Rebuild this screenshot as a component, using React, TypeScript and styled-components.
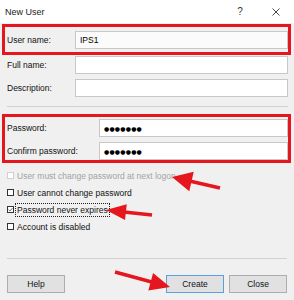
import React from 'react';
import styled, { createGlobalStyle } from 'styled-components';

const GlobalStyle = createGlobalStyle`
    html, body {
        margin: 0;
        padding: 0;
        background: #f0f0f0;
    }
    * {
        box-sizing: border-box;
    }
`;

const RED = '#e5161d';

const Window = styled.div`
    position: relative;
    width: 294px;
    height: 300px;
    display: flex;
    flex-direction: column;
    background: #f0f0f0;
    font-family: 'Liberation Sans', Arial, sans-serif;
    font-size: 8.5px;
    color: #111;
    overflow: hidden;
`;

const TitleBar = styled.div`
    height: 23px;
    display: flex;
    align-items: center;
    background: #ffffff;
    padding-left: 5px;
`;

const Title = styled.div`
    flex: 1;
    font-size: 9px;
    color: #222;
`;

const TitleButton = styled.div`
    width: 36px;
    text-align: center;
    font-size: 10px;
    color: #333;
    display: flex;
    justify-content: center;
    align-items: center;
`;

const Content = styled.div`
    flex: 1;
    padding: 1px 6px 0 7px;
    display: flex;
    flex-direction: column;
`;

const Highlight = styled.div<{ $pt: number; $pb: number; $mt?: number }>`
    margin: ${(p) => p.$mt ?? 0}px -3px 0 -5px;
    border: 3px solid ${RED};
    padding: ${(p) => p.$pt}px 0 ${(p) => p.$pb}px 2px;
    display: flex;
    flex-direction: column;
    gap: 5px;
`;

const Fields = styled.div<{ $mt?: number }>`
    display: flex;
    flex-direction: column;
    gap: 5px;
    margin-top: ${(p) => p.$mt ?? 0}px;
`;

const FieldRow = styled.div<{ $labelWidth: number }>`
    display: grid;
    grid-template-columns: ${(p) => p.$labelWidth}px 1fr;
    align-items: center;
    height: 18px;
`;

const Label = styled.div`
    white-space: nowrap;
`;

const TextBox = styled.div<{ $shade?: boolean }>`
    height: 18px;
    border: 1px solid #c8c8c8;
    background: ${(p) => (p.$shade ? '#fbfbfb' : '#ffffff')};
    display: flex;
    align-items: center;
    padding-left: 4px;
    color: #000;
`;

const Dots = styled.span`
    font-family: 'DejaVu Sans', sans-serif;
    font-size: 6px;
    letter-spacing: 0.2px;
    color: #000;
`;

const Separator = styled.div<{ $mt?: number }>`
    height: 1px;
    background: #d2d2d2;
    margin-top: ${(p) => p.$mt ?? 0}px;
`;

const Checks = styled.div`
    margin-top: 4px;
    display: flex;
    flex-direction: column;
`;

const CheckRow = styled.div<{ $disabled?: boolean }>`
    height: 17px;
    display: flex;
    align-items: center;
    gap: 3px;
    color: ${(p) => (p.$disabled ? '#a3a3a3' : '#111')};
`;

const Box = styled.div<{ $disabled?: boolean }>`
    width: 7px;
    height: 7px;
    border: 1px solid ${(p) => (p.$disabled ? '#d0d0d0' : '#333')};
    background: #fff;
    display: flex;
    align-items: center;
    justify-content: center;
`;

const CheckText = styled.span<{ $focused?: boolean }>`
    padding: 1px 1px;
    margin-left: -1px;
    outline: ${(p) => (p.$focused ? '1px dotted #222' : 'none')};
`;

const Footer = styled.div`
    display: flex;
    flex-direction: column;
    padding: 0 7px 7px 7px;
`;

const ButtonBar = styled.div`
    margin-top: 16px;
    display: flex;
    justify-content: space-between;
`;

const ButtonGroup = styled.div`
    display: flex;
    gap: 5px;
`;

const Button = styled.div<{ $primary?: boolean }>`
    width: 58px;
    height: 18px;
    display: flex;
    align-items: center;
    justify-content: center;
    background: #e1e1e1;
    border: 1px solid ${(p) => (p.$primary ? '#5a9fe0' : '#adadad')};
    color: #111;
`;

const Overlay = styled.svg`
    position: absolute;
    left: 0;
    top: 0;
    pointer-events: none;
`;

interface CheckItem {
    text: string;
    checked?: boolean;
    disabled?: boolean;
    focused?: boolean;
}

const checks: CheckItem[] = [
    { text: 'User must change password at next logon', disabled: true },
    { text: 'User cannot change password' },
    { text: 'Password never expires', checked: true, focused: true },
    { text: 'Account is disabled' },
];

const Arrow: React.FC<{ tail: [number, number]; tip: [number, number]; head: number; half: number }> = ({
    tail,
    tip,
    head,
    half,
}) => {
    const dx = tip[0] - tail[0];
    const dy = tip[1] - tail[1];
    const len = Math.hypot(dx, dy);
    const ux = dx / len;
    const uy = dy / len;
    const bx = tip[0] - ux * head;
    const by = tip[1] - uy * head;
    const nx = -uy;
    const ny = ux;
    const points = `${tip[0]},${tip[1]} ${bx + nx * half},${by + ny * half} ${bx - nx * half},${by - ny * half}`;
    return (
        <g>
            <line x1={tail[0]} y1={tail[1]} x2={bx + ux * 2} y2={by + uy * 2} stroke={RED} strokeWidth={3.5} />
            <polygon points={points} fill={RED} />
        </g>
    );
};

const App: React.FC = () => {
    return (
        <>
            <GlobalStyle />
            <Window>
                <TitleBar>
                    <Title>New User</Title>
                    <TitleButton>?</TitleButton>
                    <TitleButton>
                        <svg width="8" height="8" viewBox="0 0 8 8">
                            <path d="M0.5 0.5 L7.5 7.5 M7.5 0.5 L0.5 7.5" stroke="#333" strokeWidth="0.9" />
                        </svg>
                    </TitleButton>
                </TitleBar>
                <Content>
                    <Highlight $pt={4} $pb={3}>
                        <FieldRow $labelWidth={68}>
                            <Label>User name:</Label>
                            <TextBox $shade>IPS1</TextBox>
                        </FieldRow>
                    </Highlight>
                    <Fields $mt={1}>
                        <FieldRow $labelWidth={68}>
                            <Label>Full name:</Label>
                            <TextBox />
                        </FieldRow>
                        <FieldRow $labelWidth={68}>
                            <Label>Description:</Label>
                            <TextBox />
                        </FieldRow>
                    </Fields>
                    <Separator $mt={9} />
                    <Highlight $pt={2} $pb={0} $mt={7}>
                        <FieldRow $labelWidth={92}>
                            <Label>Password:</Label>
                            <TextBox>
                                <Dots>●●●●●●●</Dots>
                            </TextBox>
                        </FieldRow>
                        <FieldRow $labelWidth={92}>
                            <Label>Confirm password:</Label>
                            <TextBox>
                                <Dots>●●●●●●●</Dots>
                            </TextBox>
                        </FieldRow>
                    </Highlight>
                    <Checks>
                        {checks.map((item) => (
                            <CheckRow key={item.text} $disabled={item.disabled}>
                                <Box $disabled={item.disabled}>
                                    {item.checked && (
                                        <svg width="5" height="5" viewBox="0 0 5 5">
                                            <path d="M0.5 2.6 L2 4 L4.5 1" stroke="#666" strokeWidth="0.9" fill="none" />
                                        </svg>
                                    )}
                                </Box>
                                <CheckText $focused={item.focused}>{item.text}</CheckText>
                            </CheckRow>
                        ))}
                    </Checks>
                </Content>
                <Footer>
                    <Separator />
                    <ButtonBar>
                        <Button>Help</Button>
                        <ButtonGroup>
                            <Button $primary>Create</Button>
                            <Button>Close</Button>
                        </ButtonGroup>
                    </ButtonBar>
                </Footer>
                <Overlay width="294" height="300" viewBox="0 0 294 300">
                    <Arrow tail={[220, 188]} tip={[172, 177]} head={20} half={10} />
                    <Arrow tail={[152, 215]} tip={[106, 210]} head={20} half={8} />
                    <Arrow tail={[115, 272]} tip={[170, 287]} head={20} half={9} />
                </Overlay>
            </Window>
        </>
    );
};

export default App;
